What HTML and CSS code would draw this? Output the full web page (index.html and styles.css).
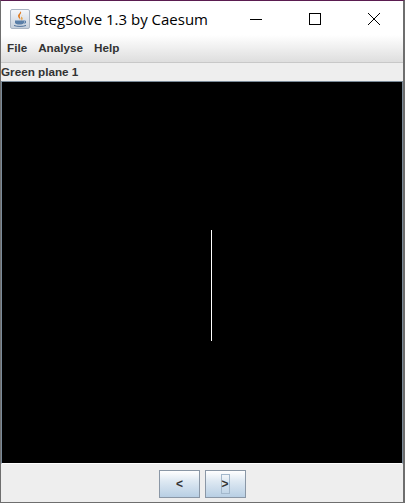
FILE: index.html
```html
<!DOCTYPE html>
<html lang="en">
<head>
  <meta charset="UTF-8" />
  <title>StegSolve 1.3 by Caesum</title>
  <link rel="stylesheet" href="styles.css">
</head>
<body>

<div class="window">
  <div class="top">
    <!-- Title bar -->
    <div class="titlebar">
      <div class="app-icon">
        <svg width="18" height="18" viewBox="0 0 18 18">
          <path d="M9 1c1 2-2 3-2 5s2 2 2 4c1-2-1-3 0-5s2-2 0-4z" fill="#e07b20" />
          <path d="M11 4c1 2-1 3-1 4s1 2 0 3c2-1 2-3 1-4s1-2 0-3z" fill="#e8a040" />
          <path d="M4 10.500h9v2c0 1.500-2 2-4.500 2S4 14 4 12.500z" fill="#5a7fa8" />
          <path d="M13 11h1.500v2H13" fill="none" stroke="#5a7fa8" />
          <path d="M3 15.500c3 1.200 9 1.200 12 0" fill="none" stroke="#4c6f99" />
        </svg>
      </div>
      <span class="title">StegSolve 1.3 by Caesum</span>
      <div class="controls">
        <div class="control">
          <svg width="12" height="12" viewBox="0 0 12 12"><path d="M0 6.500h12" stroke="#000" /></svg>
        </div>
        <div class="control">
          <svg width="12" height="12" viewBox="0 0 12 12"><rect x="0.500" y="0.500" width="11" height="11" fill="none" stroke="#000" /></svg>
        </div>
        <div class="control">
          <svg width="12" height="12" viewBox="0 0 12 12"><path d="M0 0l12 12M12 0L0 12" stroke="#000" /></svg>
        </div>
      </div>
    </div>

    <!-- Menu -->
    <div class="menubar">
      <span>File</span>
      <span>Analyse</span>
      <span>Help</span>
    </div>
  </div>

  <div class="plane-label">Green plane 1</div>

  <div class="image-box">
    <div class="plane-line"></div>
  </div>

  <!-- Navigation -->
  <div class="nav">
    <button class="nav-button">&lt;</button>
    <button class="nav-button focused"><span>&gt;</span></button>
  </div>
</div>

</body>
</html>
```

FILE: styles.css
```css
html, body {
  margin: 0;
  height: 100%;
}

body {
  font-family: "Liberation Sans", sans-serif;
  background-color: #eeeeee;
}

.window {
  box-sizing: border-box;
  width: 405px;
  height: 503px;
  display: flex;
  flex-direction: column;
  border: 1px solid #6e6e6e;
  border-top-color: #5a1c50;
  border-right-width: 2px;
  border-bottom-width: 1px;
  overflow: hidden;
}

.top {
  height: 61px;
  background: linear-gradient(#ffffff 0, #ffffff 34px, #dedede 61px);
  border-bottom: 1px solid #c8c8c8;
}

.titlebar {
  height: 36px;
  display: flex;
  align-items: center;
  padding-left: 9px;
}

.app-icon {
  box-sizing: border-box;
  width: 20px;
  height: 20px;
  border: 1px solid #a9b4c2;
  border-radius: 2px;
  background: linear-gradient(#f4f6f9, #c6d0dc);
  margin-right: 5px;
  overflow: hidden;
}

.app-icon svg {
  display: block;
  margin: 0;
}

.title {
  font-family: "Open Sans", sans-serif;
  font-size: 15px;
  color: #000;
}

.controls {
  margin-left: auto;
  display: flex;
  margin-top: -1px;
}

.control {
  width: 59px;
  display: flex;
  justify-content: center;
}

.menubar {
  display: flex;
  gap: 11px;
  padding: 4px 0 0 6px;
  font-size: 11.7px;
  font-weight: bold;
  color: #333333;
}

.plane-label {
  height: 18px;
  line-height: 18px;
  font-size: 11.7px;
  font-weight: bold;
  color: #333333;
  background-color: #eeeeee;
}

.image-box {
  position: relative;
  box-sizing: border-box;
  flex: none;
  height: 383px;
  background-color: #000;
  border: 1px solid #7a8a99;
  border-bottom-color: #fff;
}

.plane-line {
  position: absolute;
  left: 209px;
  top: 148px;
  width: 1px;
  height: 111px;
  background-color: #fff;
}

.nav {
  flex: 1;
  display: flex;
  justify-content: center;
  gap: 5px;
  padding-top: 6px;
}

.nav-button {
  box-sizing: border-box;
  width: 41px;
  height: 28px;
  padding: 0 0 0 1px;
  border: 1px solid #8a97a6;
  background: linear-gradient(#ffffff, #dde8f2 40%, #b8cfe4);
  font-family: "Liberation Sans", sans-serif;
  font-size: 12px;
  font-weight: bold;
  color: #333333;
}

.nav-button.focused {
  padding: 0;
}

.nav-button.focused span {
  display: inline-block;
  box-sizing: border-box;
  width: 9px;
  height: 20px;
  line-height: 18px;
  border: 1px solid #a3b8cc;
}
```
